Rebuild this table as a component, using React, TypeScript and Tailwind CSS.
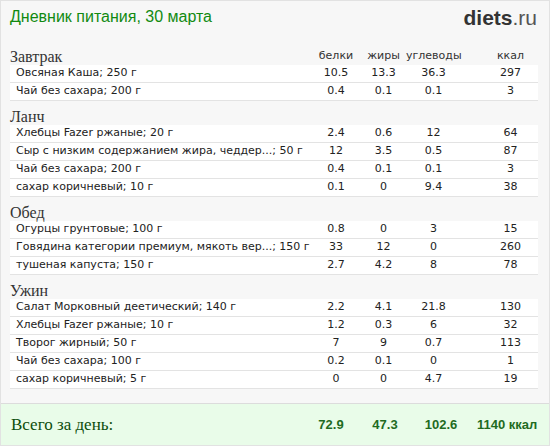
type Item = { name: string; p: string; f: string; c: string; kcal: string };
type Meal = { title: string; items: Item[] };

const meals: Meal[] = [
  {
    title: 'Завтрак',
    items: [
      { name: 'Овсяная Каша; 250 г', p: '10.5', f: '13.3', c: '36.3', kcal: '297' },
      { name: 'Чай без сахара; 200 г', p: '0.4', f: '0.1', c: '0.1', kcal: '3' },
    ],
  },
  {
    title: 'Ланч',
    items: [
      { name: 'Хлебцы Fazer ржаные; 20 г', p: '2.4', f: '0.6', c: '12', kcal: '64' },
      { name: 'Сыр с низким содержанием жира, чеддер...; 50 г', p: '12', f: '3.5', c: '0.5', kcal: '87' },
      { name: 'Чай без сахара; 200 г', p: '0.4', f: '0.1', c: '0.1', kcal: '3' },
      { name: 'сахар коричневый; 10 г', p: '0.1', f: '0', c: '9.4', kcal: '38' },
    ],
  },
  {
    title: 'Обед',
    items: [
      { name: 'Огурцы грунтовые; 100 г', p: '0.8', f: '0', c: '3', kcal: '15' },
      { name: 'Говядина категории премиум, мякоть вер...; 150 г', p: '33', f: '12', c: '0', kcal: '260' },
      { name: 'тушеная капуста; 150 г', p: '2.7', f: '4.2', c: '8', kcal: '78' },
    ],
  },
  {
    title: 'Ужин',
    items: [
      { name: 'Салат Морковный деетический; 140 г', p: '2.2', f: '4.1', c: '21.8', kcal: '130' },
      { name: 'Хлебцы Fazer ржаные; 10 г', p: '1.2', f: '0.3', c: '6', kcal: '32' },
      { name: 'Творог жирный; 50 г', p: '7', f: '9', c: '0.7', kcal: '113' },
      { name: 'Чай без сахара; 100 г', p: '0.2', f: '0.1', c: '0', kcal: '1' },
      { name: 'сахар коричневый; 5 г', p: '0', f: '0', c: '4.7', kcal: '19' },
    ],
  },
];

const serif = "font-['Liberation_Serif','DejaVu_Serif',serif]";
const sans = "font-['DejaVu_Sans','Noto_Sans',sans-serif]";

function Cols({ p, f, c, kcal }: { p: string; f: string; c: string; kcal: string }) {
  return (
    <>
      <div className="w-[50px] shrink-0 text-center">{p}</div>
      <div className="w-[45px] shrink-0 text-center">{f}</div>
      <div className="w-[55px] shrink-0 text-center">{c}</div>
      <div className="ml-[22px] w-[55px] shrink-0 text-center">{kcal}</div>
    </>
  );
}

function MealBlock({ meal, first }: { meal: Meal; first: boolean }) {
  return (
    <section>
      <div className="flex h-[24px] items-end">
        <h2 className={`${serif} flex-1 text-[16px] leading-none text-[#333]`}>{meal.title}</h2>
        {first && (
          <div className={`${sans} mb-[4px] flex text-[11px] leading-none text-[#333]`}>
            <Cols p="белки" f="жиры" c="углеводы" kcal="ккал" />
          </div>
        )}
      </div>
      <div>
        {meal.items.map((item, i) => (
          <div
            key={i}
            className={`${sans} flex h-[18px] items-center border-b border-[#e3e3e3] bg-white text-[11px] text-[#222]`}
          >
            <div className="min-w-0 flex-1 whitespace-nowrap pl-[6px]">{item.name}</div>
            <Cols {...item} />
          </div>
        ))}
      </div>
    </section>
  );
}

export default function App() {
  return (
    <div className="flex h-[446px] w-[550px] flex-col border border-[#e2e2e2] bg-[#f7f7f7]">
      <header className="flex h-[40px] items-start justify-between px-[9px] pt-[5px]">
        <h1 className="font-['Liberation_Sans',Arial,sans-serif] text-[16px] leading-[22px] text-[#118a11]">
          Дневник питания, 30 марта
        </h1>
        <div className="mr-[3px] mt-[1px] font-['Liberation_Sans',Arial,sans-serif] text-[21px] leading-[22px] text-[#333]">
          <span className="font-bold">diets</span>
          <span className="text-[#555]">.ru</span>
        </div>
      </header>
      <main className="flex flex-1 flex-col pl-[9px] pr-[11px]">
        {meals.map((m, i) => (
          <MealBlock key={m.title} meal={m} first={i === 0} />
        ))}
      </main>
      <footer className="flex h-[42px] items-center border-t border-[#dcdcdc] bg-[#e9fce9] pl-[10px] pr-[12px]">
        <div className={`${serif} flex-1 text-[17px] text-[#0c4d0c]`}>Всего за день:</div>
        <div className="flex whitespace-nowrap font-['Liberation_Sans',Arial,sans-serif] text-[13px] font-bold text-[#1f6b1f]">
          <div className="w-[40px] text-center">72.9</div>
          <div className="ml-[14px] w-[40px] text-center">47.3</div>
          <div className="ml-[11px] w-[50px] text-center">102.6</div>
          <div className="ml-[11px] w-[60px] text-right">1140 ккал</div>
        </div>
      </footer>
    </div>
  );
}
